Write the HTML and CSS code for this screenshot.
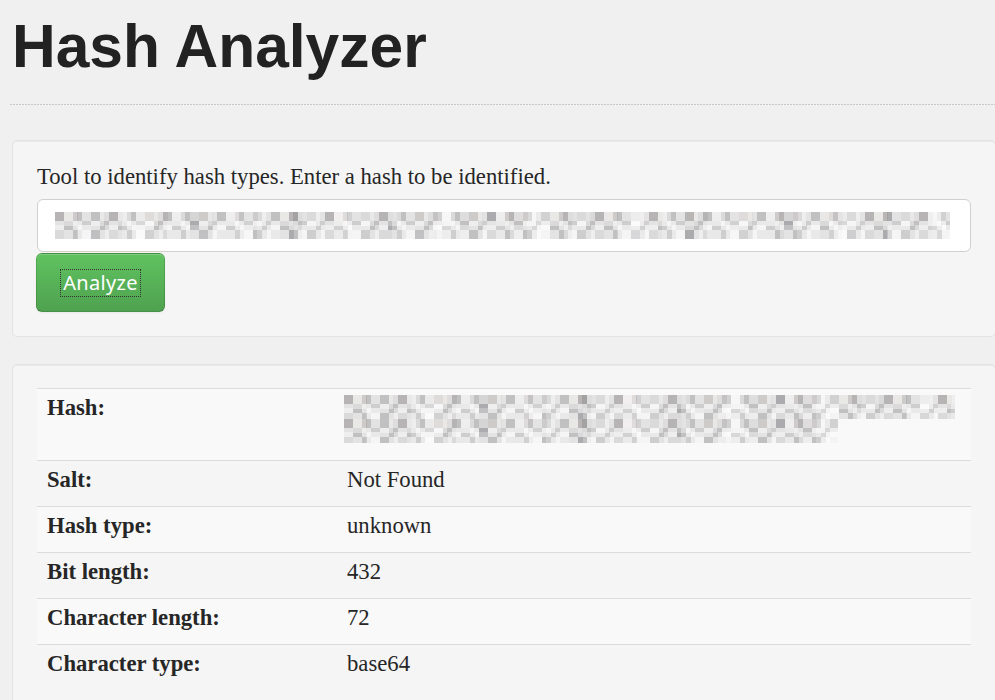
FILE: index.html
```html
<!DOCTYPE html>
<html>
<head>
  <title>Hash Analyzer</title>
  <link rel="stylesheet" href="styles.css">
</head>
<body>
  <div class="page">
    <header class="page-header">
      <h1>Hash Analyzer</h1>
    </header>

    <div class="well">
      <form class="analyze-form">
        <p class="intro">Tool to identify hash types. Enter a hash to be identified.</p>
        <div class="hash-input">
          <span class="mosaic mosaic-input"></span>
        </div>
        <button type="button" class="btn-analyze"><span class="focus-ring">Analyze</span></button>
      </form>
    </div>

    <div class="well">
      <table class="result-table">
        <tr>
          <th>Hash:</th>
          <td>
            <span class="mosaic mosaic-line-1"></span>
            <span class="mosaic mosaic-line-2"></span>
          </td>
        </tr>
        <tr>
          <th>Salt:</th>
          <td>Not Found</td>
        </tr>
        <tr>
          <th>Hash type:</th>
          <td>unknown</td>
        </tr>
        <tr>
          <th>Bit length:</th>
          <td>432</td>
        </tr>
        <tr>
          <th>Character length:</th>
          <td>72</td>
        </tr>
        <tr>
          <th>Character type:</th>
          <td>base64</td>
        </tr>
      </table>
    </div>
  </div>
</body>
</html>
```

FILE: styles.css
```css
/* Base page */
html, body {
  overflow: hidden;
}

body {
  margin: 0;
  background: #f0f0f0;
  font-family: "Liberation Serif", "Times New Roman", serif;
  font-size: 22.7px;
  line-height: 25px;
  color: #262626;
}

.page {
  margin-left: 9px;
  width: 990px;
}

/* Header with dotted rule */
.page-header {
  padding-top: 13px;
  padding-bottom: 26px;
  background-image: linear-gradient(to right, #c8c8c8 2px, transparent 2px);
  background-size: 3px 1px;
  background-repeat: repeat-x;
  background-position: 1px bottom;
  margin-bottom: 35px;
}

.page-header h1 {
  margin: 0;
  padding-left: 3px;
  font-family: "Liberation Sans", Arial, sans-serif;
  font-weight: bold;
  font-size: 60.5px;
  line-height: 66px;
  color: #222;
}

/* Panels */
.well {
  box-sizing: border-box;
  width: 984px;
  margin-left: 3px;
  margin-bottom: 27px;
  padding: 23px 24px 24px;
  background: #f5f5f5;
  border: 1px solid #e3e3e3;
  border-radius: 5px;
  box-shadow: inset 0 1px 1px rgba(0,0,0,0.05);
}

.intro {
  margin: 0 0 10px;
}

.hash-input {
  box-sizing: border-box;
  height: 53px;
  display: flex;
  align-items: center;
  padding-left: 17px;
  background: #fff;
  border: 1px solid #d2d0cc;
  border-radius: 6px;
}

/* Pixelated (censored) hash text */
.mosaic {
  display: block;
  background-color: #dadada;
  background-image:
    conic-gradient(rgba(255,255,255,0.55) 25%, transparent 0 50%, rgba(255,255,255,0.55) 0 75%, transparent 0),
    conic-gradient(rgba(40,40,50,0.14) 25%, transparent 0 50%, rgba(40,40,50,0.14) 0 75%, transparent 0),
    conic-gradient(rgba(255,255,255,0.4) 25%, transparent 0 50%, rgba(120,100,90,0.12) 0 75%, transparent 0),
    repeating-linear-gradient(90deg, transparent 0 36px, rgba(60,60,70,0.16) 36px 45px, transparent 45px 81px, rgba(255,255,255,0.5) 81px 99px);
  background-size: 18px 18px, 27px 27px, 45px 36px, auto;
  background-position: 0 0, 9px 0, 0 9px, 0 0;
}

.mosaic-input {
  width: 895px;
  height: 27px;
}

.mosaic-line-1 {
  width: 611px;
  height: 24px;
  margin-left: -3px;
}

.mosaic-line-2 {
  width: 494px;
  height: 24px;
  margin: 0 0 3px -3px;
}

/* Analyze button */
.btn-analyze {
  display: block;
  width: 129px;
  height: 59px;
  margin: 1px 0 0 -1px;
  padding: 0;
  background: linear-gradient(#60c260, #4fa24f);
  border: 1px solid rgba(0,0,0,0.12);
  border-bottom-color: rgba(0,0,0,0.25);
  border-radius: 6px;
  box-shadow: inset 0 1px 0 rgba(255,255,255,0.2), 0 1px 2px rgba(0,0,0,0.05);
  color: #fff;
  font-family: "Noto Sans", "Open Sans", sans-serif;
  font-size: 20px;
  letter-spacing: 0.3px;
  cursor: pointer;
}

.focus-ring {
  display: inline-block;
  padding: 0 2px;
  line-height: 26px;
  border: 1px dotted #333;
}

/* Result table */
.result-table {
  width: 100%;
  border-collapse: collapse;
}

.result-table th,
.result-table td {
  padding: 6px 10px 14px;
  text-align: left;
  vertical-align: top;
  border-top: 1px solid #dcdcdc;
}

.result-table th {
  width: 280px;
  font-weight: bold;
}

.result-table tr:nth-child(odd) {
  background: #f9f9f9;
}
```
